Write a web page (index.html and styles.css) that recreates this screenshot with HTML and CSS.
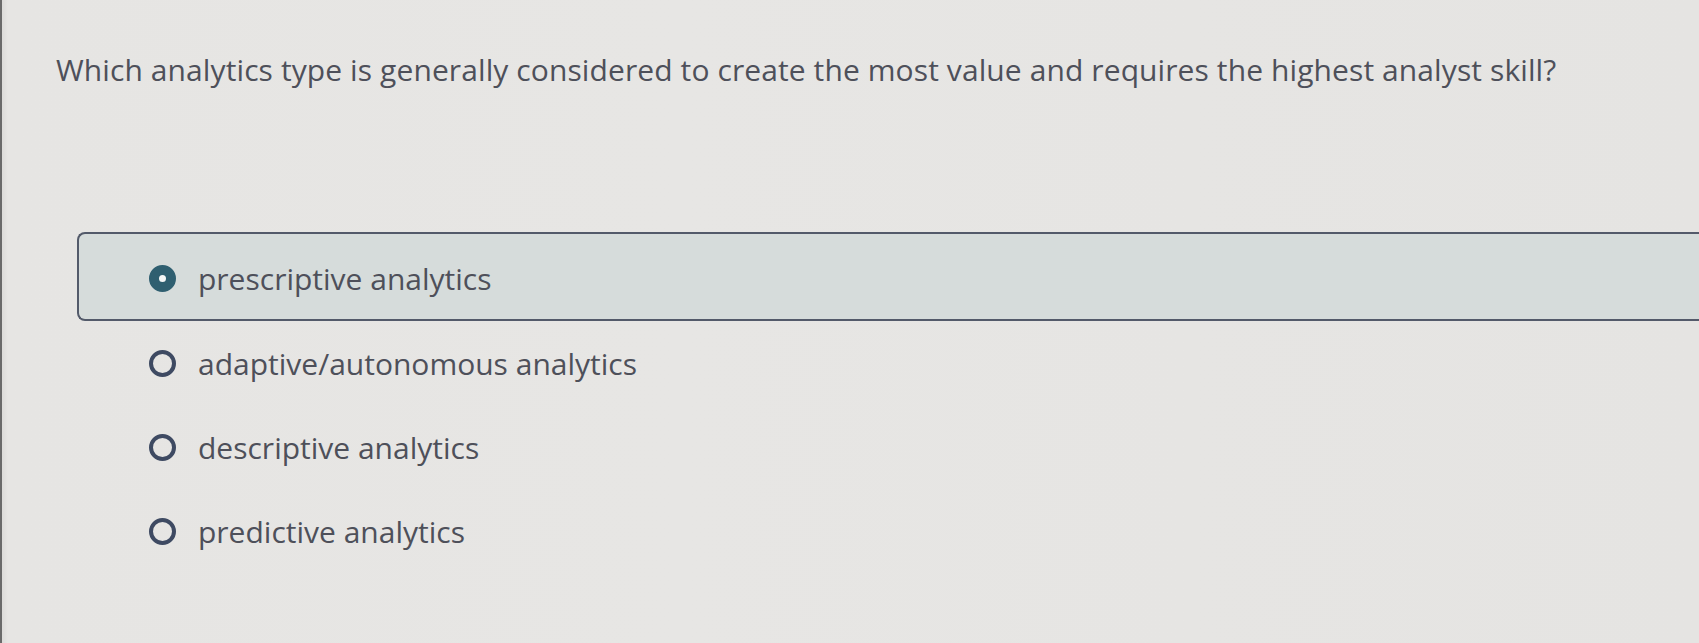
FILE: index.html
```html
<!DOCTYPE html>
<html lang="en">
<head>
<meta charset="utf-8">
<title>Question</title>
<link rel="stylesheet" href="styles.css">
</head>
<body>
<div class="page">
  <p class="question">Which analytics type is generally considered to create the most value and requires the highest analyst skill?</p>
  <div class="options">
    <div class="option selected">
      <span class="radio checked"></span>
      <span class="label">prescriptive analytics</span>
    </div>
    <div class="option">
      <span class="radio"></span>
      <span class="label">adaptive/autonomous analytics</span>
    </div>
    <div class="option">
      <span class="radio"></span>
      <span class="label">descriptive analytics</span>
    </div>
    <div class="option">
      <span class="radio"></span>
      <span class="label">predictive analytics</span>
    </div>
  </div>
</div>
</body>
</html>
```

FILE: styles.css
```css
html, body {
  margin: 0;
  padding: 0;
  height: 100%;
  overflow: hidden;
}
body {
  background: #e4e3e1;
  font-family: "Open Sans", "Liberation Sans", sans-serif;
  color: #4e505a;
}
.page {
  height: 100%;
  box-sizing: border-box;
  border-left: 2px solid #6a6a6a;
  background: linear-gradient(90deg, #dcdbd9 0, #e6e5e3 6px, #e7e6e4 40%, #e5e4e2 100%);
  padding-left: 54px;
  padding-top: 50px;
}
.question {
  margin: 0;
  font-size: 30px;
  line-height: 40px;
  letter-spacing: 0.1px;
}
.options {
  margin-top: 142px;
  margin-left: 21px;
  display: flex;
  flex-direction: column;
}
.option {
  display: flex;
  align-items: center;
  gap: 22px;
  height: 84px;
  padding-left: 72px;
  box-sizing: border-box;
  font-size: 30px;
  margin-right: -40px;
}
.option.selected {
  background: #d6dcdb;
  border: 2px solid #535a6a;
  border-right: none;
  border-radius: 8px 0 0 8px;
  height: 89px;
  padding-left: 70px;
  padding-top: 4px;
}
.radio {
  width: 27px;
  height: 27px;
  box-sizing: border-box;
  border-radius: 50%;
  border: 4px solid #3e4a62;
  flex: none;
}
.radio.checked {
  border: 10px solid #2f5f70;
  background: #f4f6f6;
}
```
